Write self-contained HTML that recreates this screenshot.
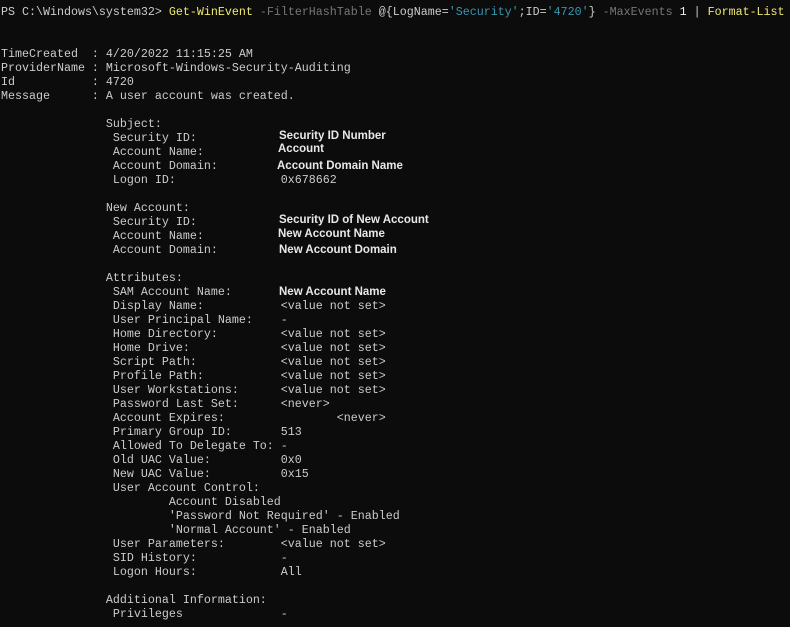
<!DOCTYPE html>
<html><head><meta charset="utf-8"><style>
html,body{margin:0;padding:0;background:#0c0c0c;width:790px;height:627px;overflow:hidden}
pre{position:absolute;left:1px;top:5px;margin:0;font-family:"Liberation Mono",monospace;font-size:11.67px;line-height:14px;color:#cccccc;white-space:pre}
.y{color:#f0ea70}.g{color:#767676}.c{color:#3a96b0}.w{color:#f2f2f2}
.s{position:absolute;font-family:"Liberation Sans",sans-serif;font-weight:bold;font-size:11.5px;color:#e8e8e8;line-height:14px;white-space:nowrap}
</style></head><body>
<pre>PS C:\Windows\system32&gt; <span class="y">Get-WinEvent</span> <span class="g">-FilterHashTable</span> @{LogName=<span class="c">'Security'</span>;ID=<span class="c">'4720'</span>} <span class="g">-MaxEvents</span> <span class="w">1</span> | <span class="y">Format-List</span>


TimeCreated  : 4/20/2022 11:15:25 AM
ProviderName : Microsoft-Windows-Security-Auditing
Id           : 4720
Message      : A user account was created.

               Subject:
                Security ID:
                Account Name:
                Account Domain:
                Logon ID:               0x678662

               New Account:
                Security ID:
                Account Name:
                Account Domain:

               Attributes:
                SAM Account Name:
                Display Name:           &lt;value not set&gt;
                User Principal Name:    -
                Home Directory:         &lt;value not set&gt;
                Home Drive:             &lt;value not set&gt;
                Script Path:            &lt;value not set&gt;
                Profile Path:           &lt;value not set&gt;
                User Workstations:      &lt;value not set&gt;
                Password Last Set:      &lt;never&gt;
                Account Expires:                &lt;never&gt;
                Primary Group ID:       513
                Allowed To Delegate To: -
                Old UAC Value:          0x0
                New UAC Value:          0x15
                User Account Control:
                        Account Disabled
                        'Password Not Required' - Enabled
                        'Normal Account' - Enabled
                User Parameters:        &lt;value not set&gt;
                SID History:            -
                Logon Hours:            All

               Additional Information:
                Privileges              -</pre>
<div class="s" style="left:279px;top:129px">Security ID Number</div>
<div class="s" style="left:278px;top:142px">Account</div>
<div class="s" style="left:277px;top:159px">Account Domain Name</div>
<div class="s" style="left:279px;top:213px">Security ID of New Account</div>
<div class="s" style="left:278px;top:227px">New Account Name</div>
<div class="s" style="left:279px;top:243px">New Account Domain</div>
<div class="s" style="left:279px;top:285px">New Account Name</div>
</body></html>
